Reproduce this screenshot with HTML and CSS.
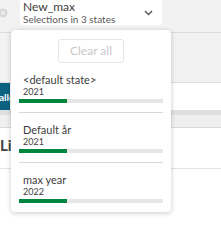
FILE: index.html
```html
<!DOCTYPE html>
<html>
<head>
<meta charset="utf-8">
<link rel="stylesheet" href="styles.css">
</head>
<body>
<div class="page">
  <div class="topbar">
    <div class="clear-icon">
      <svg width="10" height="10" viewBox="0 0 10 10"><circle cx="5" cy="5" r="4.5" fill="#d6d6d6"/><path d="M3.2 3.2 L6.8 6.8 M6.8 3.2 L3.2 6.8" stroke="#f2f2f2" stroke-width="1.2"/></svg>
    </div>
    <div class="selbox">
      <div class="seltext">
        <div class="selname">New_max</div>
        <div class="selsub">Selections in 3 states</div>
      </div>
      <svg class="chev" width="9" height="6" viewBox="0 0 9 6"><path d="M1 1 L4.5 4.5 L8 1" fill="none" stroke="#595959" stroke-width="1.5"/></svg>
    </div>
  </div>
  <div class="toolbar"></div>
  <div class="row">
    <div class="teal"><span>alle</span></div>
  </div>
  <div class="tabs"><div class="tabs-top"></div></div>
  <div class="content">
    <div class="title">Lik</div>
  </div>
</div>

<div class="popup">
  <div class="btnwrap"><div class="clearall">Clear all</div></div>
  <div class="item">
    <div class="ititle">&lt;default state&gt;</div>
    <div class="iyear">2021</div>
    <div class="bar"><div class="fill" style="width:33.3%"></div></div>
  </div>
  <div class="item">
    <div class="ititle">Default år</div>
    <div class="iyear">2021</div>
    <div class="bar"><div class="fill" style="width:33.3%"></div></div>
  </div>
  <div class="item last">
    <div class="ititle">max year</div>
    <div class="iyear">2022</div>
    <div class="bar"><div class="fill" style="width:33.3%"></div></div>
  </div>
</div>
</body>
</html>
```
FILE: styles.css
```css
* { box-sizing: border-box; }
html, body { margin: 0; padding: 0; }
body {
  width: 221px;
  height: 252px;
  overflow: hidden;
  background: #ffffff;
  font-family: Lato, "Noto Sans", sans-serif;
  color: #404040;
  position: relative;
}
.page { width: 221px; }
.topbar {
  height: 33px;
  background: #f2f2f2;
  border-bottom: 1px solid #dcdcdc;
  display: flex;
  align-items: flex-start;
}
.clear-icon {
  width: 20px;
  height: 25px;
  display: flex;
  align-items: center;
  margin-left: -2px;
}
.clear-icon svg { display: block; }
.selbox {
  margin-left: 2px;
  width: 142px;
  height: 25px;
  background: #ffffff;
  border-radius: 0 0 3px 3px;
  display: flex;
  align-items: center;
  padding: 0 9px 0 3px;
}
.seltext { flex: 1; margin-top: -1px; }
.selname {
  font-size: 12px;
  line-height: 13px;
  color: #404040;
}
.selsub {
  font-size: 10px;
  line-height: 12px;
  color: #595959;
}
.chev { display: block; margin-top: 1px; }
.toolbar {
  height: 50px;
  background: #f2f2f2;
  border-bottom: 1px solid #dedede;
}
.row {
  height: 27px;
  background: #ffffff;
}
.teal {
  width: 10px;
  height: 27px;
  background: #0b6280;
  overflow: hidden;
  display: flex;
  align-items: center;
}
.teal span {
  color: #ffffff;
  font-size: 10px;
  font-weight: bold;
  margin-left: -1px;
  white-space: nowrap;
}
.tabs {
  height: 18px;
  background: #efefef;
  border-bottom: 1px solid #d9d9d9;
}
.tabs-top { height: 5px; background: #e0e0e0; }
.content {
  height: 41px;
  border-bottom: 1px solid #e3e3e3;
  padding-top: 8px;
}
.title {
  width: 11px;
  overflow: hidden;
  font-size: 15px;
  font-weight: bold;
  color: #404040;
  white-space: nowrap;
  line-height: 18px;
}
.popup {
  position: absolute;
  left: 11px;
  top: 30px;
  width: 160px;
  height: 182px;
  background: #ffffff;
  border-radius: 4px;
  box-shadow: 0 1px 5px rgba(0, 0, 0, 0.22);
  padding: 9px 8px 0 8px;
}
.btnwrap { display: flex; justify-content: center; }
.clearall {
  width: 66px;
  height: 24px;
  border: 1px solid #e6e6e6;
  border-radius: 3px;
  font-size: 12px;
  line-height: 22px;
  color: #c8c8c8;
  text-align: center;
}
.item {
  padding: 11px 0 9px 0;
  border-bottom: 1px solid #d9d9d9;
}
.item.last { border-bottom: none; }
.ititle {
  font-size: 11px;
  line-height: 12px;
  color: #404040;
  padding-left: 4px;
}
.iyear {
  font-size: 9px;
  line-height: 11px;
  color: #404040;
  padding-left: 4px;
}
.bar {
  margin-top: 2px;
  height: 4px;
  background: #e6e6e6;
}
.fill { height: 4px; background: #00873d; }
```
